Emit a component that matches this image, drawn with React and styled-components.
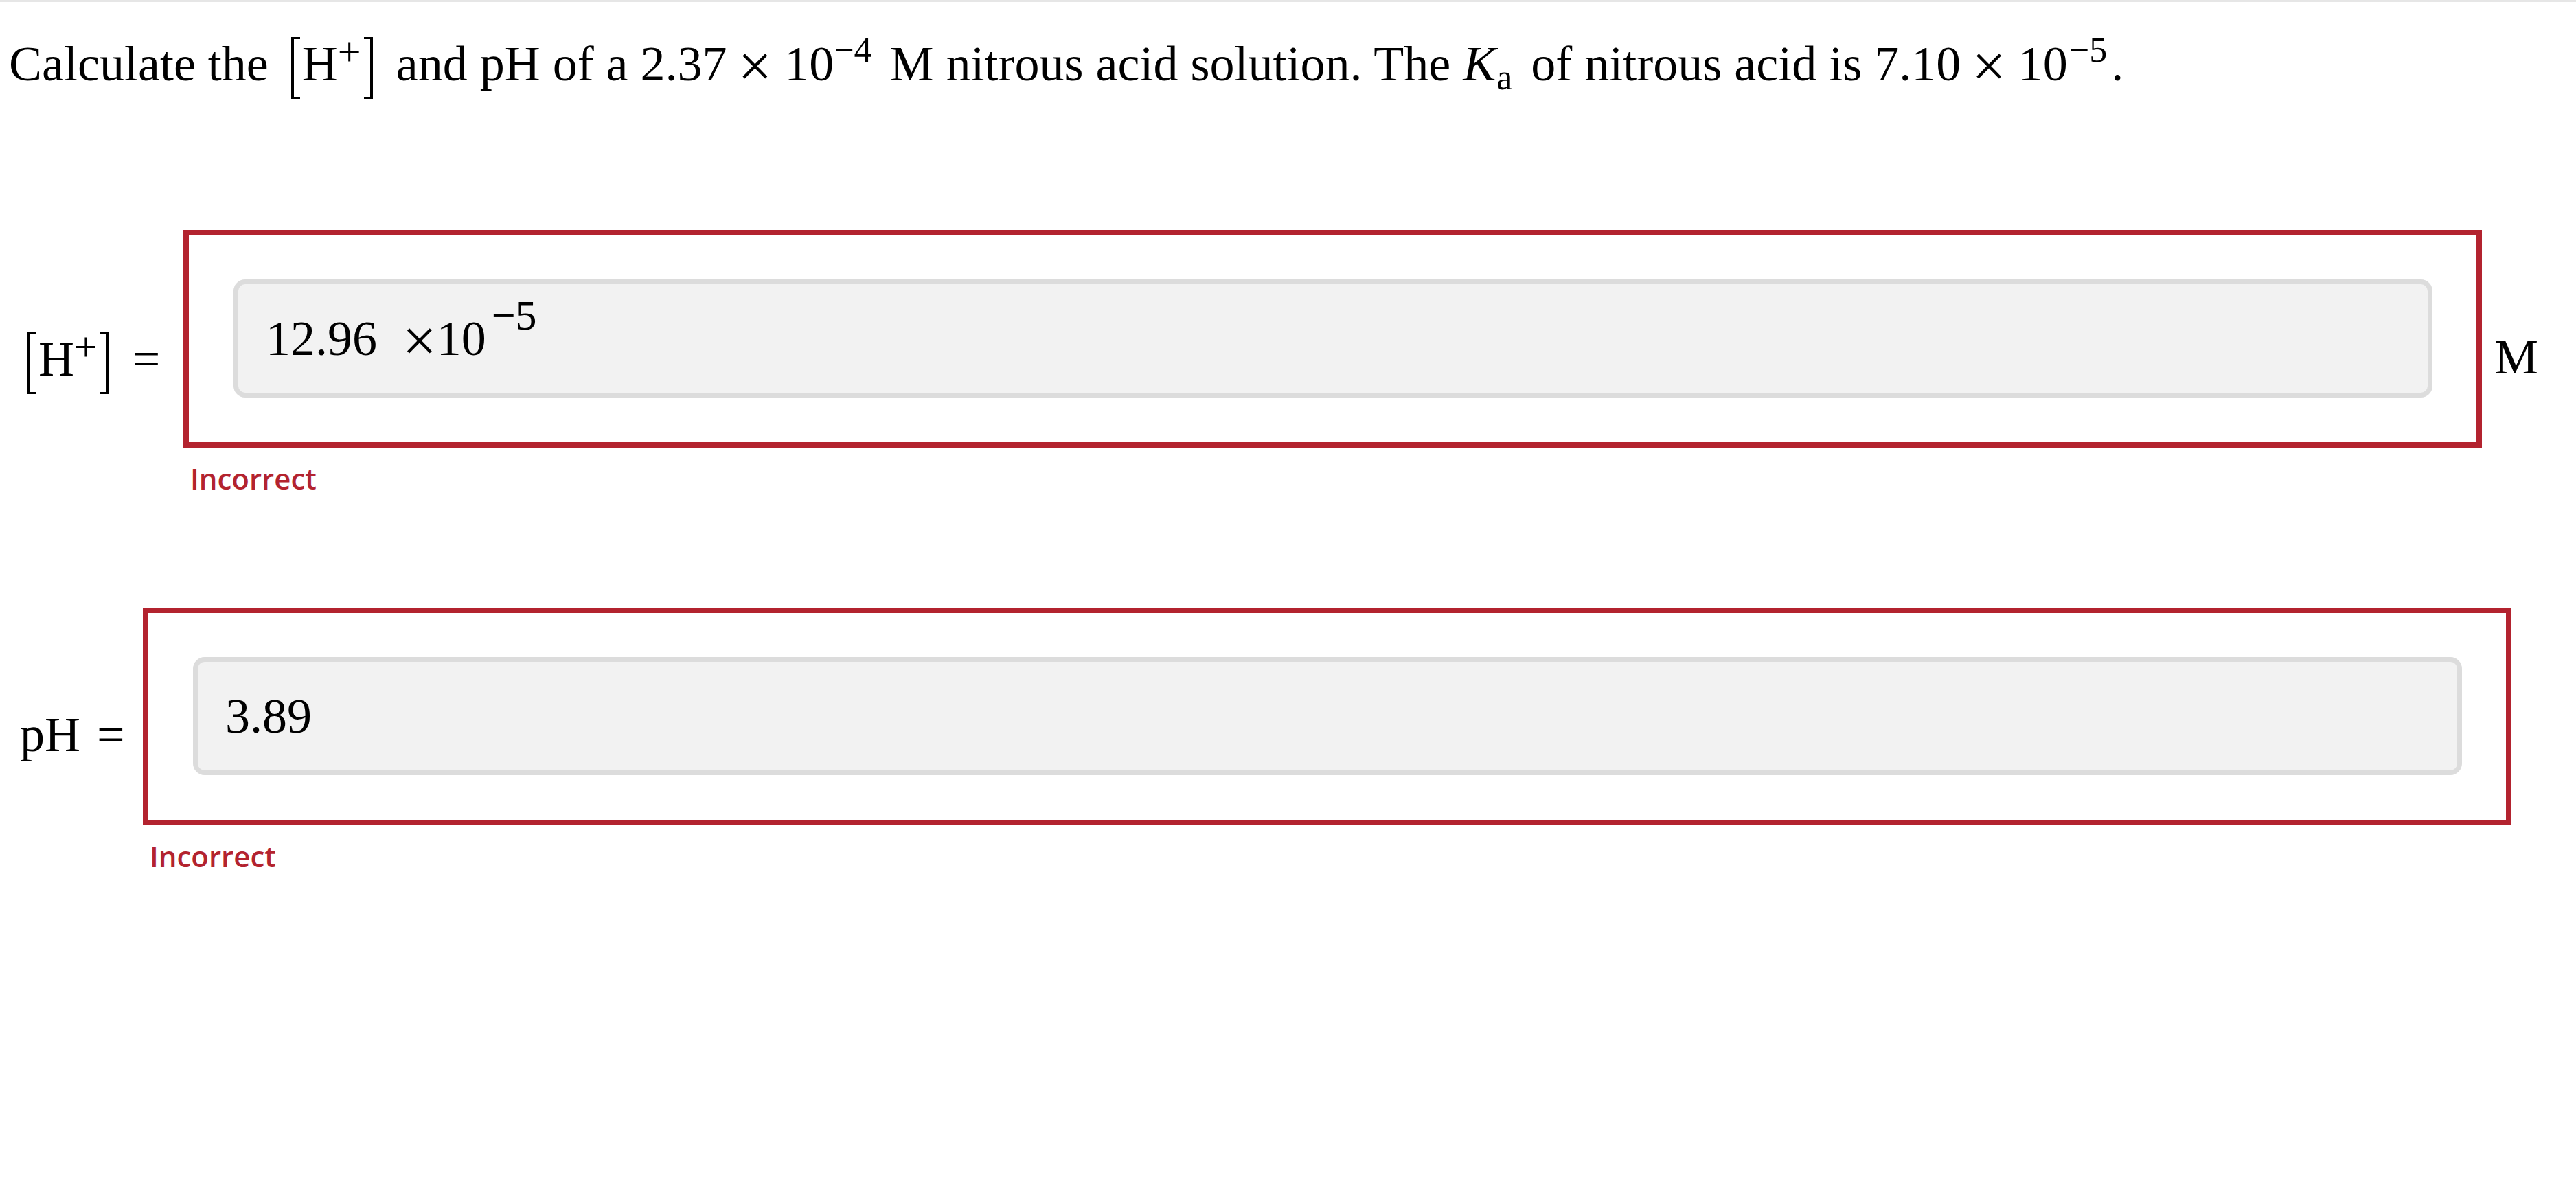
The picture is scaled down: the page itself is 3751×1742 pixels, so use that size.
import React from "react";
import styled, { createGlobalStyle } from "styled-components";

const GlobalStyle = createGlobalStyle`
  html, body { margin: 0; padding: 0; background: #ffffff; }
  body {
    font-family: "Liberation Serif", "Times New Roman", serif;
    color: #000000;
  }
`;

const Page = styled.div`
  border-top: 3px solid #e6e6e6;
  min-height: 1739px;
  box-sizing: border-box;
`;

const Question = styled.p`
  margin: 47px 0 0 0;
  padding-left: 13px;
  font-size: 72px;
  line-height: 86px;
  height: 86px;
  white-space: nowrap;
`;

const MathGroup = styled.span`
  display: inline-block;
  margin: 0 ${(p) => p.$right ?? 0}px 0 ${(p) => p.$left ?? 0}px;
  line-height: 0;
  white-space: nowrap;
`;

const Bracket = styled.span`
  display: inline-block;
  box-sizing: border-box;
  width: 13px;
  height: 90px;
  vertical-align: -27px;
  border: 0 solid #000;
  border-top-width: 3px;
  border-bottom-width: 3px;
  ${(p) => (p.$right ? "border-right-width: 4px;" : "border-left-width: 4px;")}
  margin: ${(p) => (p.$right ? "0 0 0 4px" : "0 3px 0 0")};
`;

const Plus = styled.span`
  font-size: 60px;
  line-height: 0;
  vertical-align: 22px;
`;

const Sup = styled.span`
  font-size: ${(p) => p.$size ?? 52}px;
  line-height: 0;
  vertical-align: ${(p) => p.$raise ?? 27}px;
  margin-left: ${(p) => p.$gap ?? 0}px;
  margin-right: ${(p) => p.$after ?? 0}px;
`;

const Sub = styled.span`
  font-size: 52px;
  line-height: 0;
  vertical-align: -13px;
  margin: 0 9px 0 1px;
`;

const Italic = styled.span`
  font-style: italic;
`;

const Times = styled.span`
  font-size: 88px;
  line-height: 0;
  vertical-align: -9px;
  margin: 0 ${(p) => p.$right ?? 18}px 0 ${(p) => p.$left ?? 16}px;
`;

const Row = styled.div`
  display: flex;
  align-items: flex-start;
  margin-top: ${(p) => p.$top}px;
`;

const Label = styled.div`
  flex: none;
  box-sizing: border-box;
  margin-left: ${(p) => p.$left}px;
  width: ${(p) => p.$width}px;
  margin-top: 149px;
  font-size: 72px;
  line-height: 72px;
  white-space: nowrap;
`;

const Equals = styled.span`
  margin-left: ${(p) => p.$gap}px;
`;

const Field = styled.div`
  flex: none;
  display: flex;
  flex-direction: column;
  width: ${(p) => p.$width}px;
`;

const AnswerBox = styled.div`
  box-sizing: border-box;
  border: 8px solid #b3232f;
  padding: 64px 64px 65px 65px;
`;

const InputLike = styled.div`
  box-sizing: border-box;
  height: 172px;
  display: flex;
  align-items: center;
  background: #f2f2f2;
  border: 7px solid #dcdcdc;
  border-radius: 17px;
  padding-left: 40px;
  font-size: 72px;
`;

const Value = styled.span`
  line-height: 72px;
  white-space: nowrap;
`;

const Feedback = styled.div`
  margin: 20px 0 0 10px;
  font-family: "Open Sans", "Liberation Sans", sans-serif;
  font-weight: 600;
  font-size: 42px;
  line-height: 50px;
  color: #b3232f;
`;

const Unit = styled.div`
  flex: none;
  margin: 149px 0 0 18px;
  font-size: 72px;
  line-height: 72px;
`;

export default function App() {
  return (
    <>
      <GlobalStyle />
      <Page>
        <Question>
          Calculate the
          <MathGroup $left={33} $right={34}>
            <Bracket />
            <span style={{ lineHeight: "86px" }}>H</span>
            <Plus>+</Plus>
            <Bracket $right />
          </MathGroup>
          and pH of a 2.37<Times>×</Times>10
          <Sup $after={8}>−4</Sup> M nitrous acid solution. The{" "}
          <Italic>K</Italic>
          <Sub>a</Sub> of nitrous acid is 7.10<Times>×</Times>10
          <Sup $gap={2} $after={6}>−5</Sup>.
        </Question>

        <Row $top={199}>
          <Label $left={40} $width={227}>
            <Bracket />H<Plus>+</Plus>
            <Bracket $right />
            <Equals $gap={34}>=</Equals>
          </Label>
          <Field $width={3347}>
            <AnswerBox>
              <InputLike>
                <Value>
                  12.96<Times $left={37} $right={0}>×</Times>10
                  <Sup $size={62} $raise={37} $gap={8}>−5</Sup>
                </Value>
              </InputLike>
            </AnswerBox>
            <Feedback>Incorrect</Feedback>
          </Field>
          <Unit>M</Unit>
        </Row>

        <Row $top={163}>
          <Label $left={29} $width={179}>
            pH<Equals $gap={24}>=</Equals>
          </Label>
          <Field $width={3449}>
            <AnswerBox>
              <InputLike>
                <Value>3.89</Value>
              </InputLike>
            </AnswerBox>
            <Feedback>Incorrect</Feedback>
          </Field>
        </Row>
      </Page>
    </>
  );
}
